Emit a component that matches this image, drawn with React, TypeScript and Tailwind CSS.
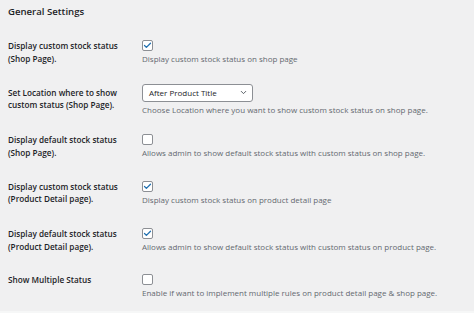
import { Check, ChevronDown } from 'lucide-react'

type Row = {
  label: string[]
  kind: 'check' | 'select'
  checked?: boolean
  desc: string
  pad: string
}

const rows: Row[] = [
  { label: ['Display custom stock status', '(Shop Page).'], kind: 'check', checked: true, desc: 'Display custom stock status on shop page', pad: 'pt-[21px]' },
  { label: ['Set Location where to show', 'custom status (Shop Page).'], kind: 'select', desc: 'Choose Location where you want to show custom stock status on shop page.', pad: 'pt-[18px]' },
  { label: ['Display default stock status', '(Shop Page).'], kind: 'check', checked: false, desc: 'Allows admin to show default stock status with custom status on shop page.', pad: 'pt-[18px]' },
  { label: ['Display custom stock status', '(Product Detail page).'], kind: 'check', checked: true, desc: 'Display custom stock status on product detail page', pad: 'pt-[21px]' },
  { label: ['Display default stock status', '(Product Detail page).'], kind: 'check', checked: true, desc: 'Allows admin to show default stock status with custom status on product page.', pad: 'pt-[22px]' },
  { label: ['Show Multiple Status'], kind: 'check', checked: false, desc: 'Enable if want to implement multiple rules on product detail page & shop page.', pad: 'pt-[20px]' },
]

function Checkbox({ checked }: { checked?: boolean }) {
  return (
    <span className="flex h-[11px] w-[11px] items-center justify-center rounded-[2px] border border-[#8c8f94] bg-white">
      {checked && <Check className="h-[9px] w-[9px] text-[#2271b1]" strokeWidth={3.5} />}
    </span>
  )
}

export default function App() {
  return (
    <div className="h-[313px] w-[474px] overflow-hidden bg-[#f0f0f1] font-['Open_Sans',sans-serif] text-[#1d2327]">
      <div className="h-[311px]">
        <h2 className="pl-2 pt-[5px] text-[9.6px] font-semibold leading-[14px]">General Settings</h2>
        {rows.map((r, i) => (
          <div key={i} className={`flex ${r.pad}`}>
            <div className={`w-[142px] pl-2 text-[8.2px] font-semibold leading-[12.5px] ${r.kind === 'select' ? 'pt-[3px]' : ''}`}>
              {r.label.map((l) => (
                <div key={l}>{l}</div>
              ))}
            </div>
            <div className="flex flex-col">
              {r.kind === 'check' ? (
                <Checkbox checked={r.checked} />
              ) : (
                <div className="flex h-[18px] w-[111px] items-center justify-between rounded-[3px] border border-[#8c8f94] bg-white pl-[6px] pr-[4px] text-[8px]">
                  <span>After Product Title</span>
                  <ChevronDown className="h-[9px] w-[9px] text-[#50575e]" strokeWidth={2.5} />
                </div>
              )}
              <p className="mt-[2px] text-[8px] leading-[12.5px] text-[#646970]">{r.desc}</p>
            </div>
          </div>
        ))}
      </div>
      <div className="h-[2px] bg-[#f6f7f7]" />
    </div>
  )
}
